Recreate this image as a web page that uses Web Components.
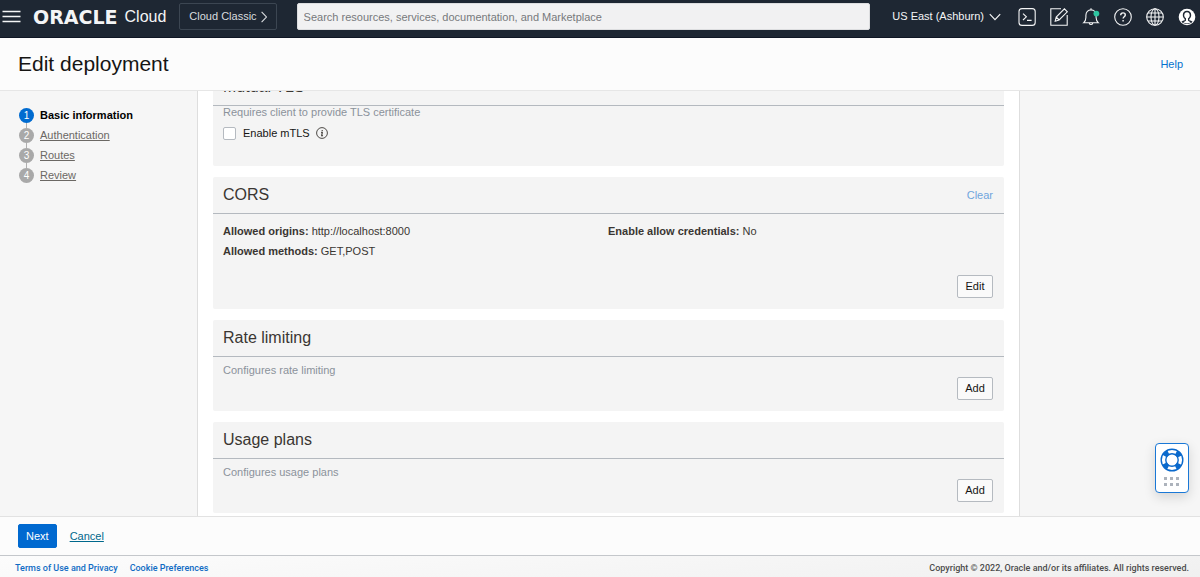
<!DOCTYPE html>
<html lang="en">
<head>
<meta charset="utf-8">
<meta name="viewport" content="width=device-width, initial-scale=1">
<title>Edit deployment</title>
<style>
  html, body { height: 100%; margin: 0; }
  body { font: 11px/13px "Liberation Sans", Arial, sans-serif; color: #3a3632; background: #fcfcfc; }
</style>
</head>
<body>
<oc-app></oc-app>

<script>
const define = (name, html, ready) => {
  const template = document.createElement('template');
  template.innerHTML = html;
  customElements.define(name, class extends HTMLElement {
    constructor() {
      super();
      this.attachShadow({ mode: 'open' }).append(template.content.cloneNode(true));
    }
    connectedCallback() { if (ready) ready(this, this.shadowRoot); }
  });
};

define('oc-logo', `
  <style>
    :host { display: flex; align-items: center; gap: 7px; color: #f4f5f6; }
    .brand { font: bold 19px/20px "DejaVu Sans", sans-serif; }
    .product { font-size: 16px; line-height: 20px; }
  </style>
  <span class="brand">ORACLE</span><span class="product">Cloud</span>`);

define('oc-icon-button', `
  <style>
    :host { display: block; }
    button { display: block; padding: 0; border: 0; background: none; color: inherit; }
    ::slotted(svg) { display: block; width: 18px; height: 18px; overflow: visible; fill: none; stroke: currentColor; stroke-width: 1.1; }
  </style>
  <button type="button"><slot></slot></button>`,
  (host, root) => root.querySelector('button').setAttribute('aria-label', host.getAttribute('label')));

define('oc-topbar', `
  <style>
    :host { display: flex; align-items: center; box-sizing: border-box; height: 38px; padding: 0 4px 4px 2px;
            background: #1e2733; border-bottom: 1px solid #0f1624; color: #f4f5f6; }
    svg { display: block; fill: none; stroke: currentColor; }
    oc-logo { margin-left: 12px; }
    button { font: inherit; color: inherit; background: none; border: 0; padding: 0; display: flex; align-items: center; }
    .classic { box-sizing: border-box; height: 27px; margin-left: 13px; padding: 0 9px; gap: 4px; color: #d9dcdf;
               border: 1px solid #3c4652; border-radius: 2px; white-space: nowrap; }
    input { flex: 1; min-width: 0; box-sizing: border-box; height: 27px; margin: 0 22px 0 20px; padding: 0 6px;
            font: inherit; color: #333; background: #f1f1f2; border: 1px solid #dcdddf; border-radius: 2px; }
    input::placeholder { color: #77797c; opacity: 1; }
    .region { gap: 5px; white-space: nowrap; }
    nav { display: flex; gap: 14px; margin-left: 17px; }
  </style>
  <button type="button" aria-label="Navigation menu">
    <svg width="19" height="13" viewBox="0 0 19 13" stroke-width="1.6"><path d="M.5 1.5h18M.5 6.5h18M.5 11.5h18"/></svg>
  </button>
  <oc-logo></oc-logo>
  <button type="button" class="classic">Cloud Classic
    <svg width="6" height="12" viewBox="0 0 6 12" stroke-width="1.1"><path d="M.6 .8 5.4 6 .6 11.2"/></svg>
  </button>
  <input type="search" aria-label="Search" placeholder="Search resources, services, documentation, and Marketplace">
  <button type="button" class="region">US East (Ashburn)
    <svg width="12" height="8" viewBox="0 0 12 8" stroke-width="1.2"><path d="M.8 1.2 6 6.6l5.2-5.4"/></svg>
  </button>
  <nav aria-label="Tools">
    <oc-icon-button label="Developer tools"><svg viewBox="0 0 18 18"><rect x="1" y=".6" width="16.2" height="16.8" rx="3"/><path d="M5 5.6 8.4 8.8 5 12M9 12.4h4.6"/></svg></oc-icon-button>
    <oc-icon-button label="Edit"><svg viewBox="0 0 18 18"><path d="M11 .8H.8v16.400h16.400V7M5.200 13.200l1-4.200L14.400.9l2.900 2.900-8.200 8.200zM6.200 9l2.900 3"/></svg></oc-icon-button>
    <oc-icon-button label="Announcements"><svg viewBox="0 0 18 18"><path d="M9 .2v1.6M1.600 14.800c1.800-1.600 2.300-3 2.300-5.400V7.200C3.900 4 6.100 1.900 9 1.900s5.100 2.100 5.100 5.300v2.200c0 2.400.5 3.800 2.300 5.400zM7.200 15.200a1.900 1.900 0 0 0 3.600 0"/><circle cx="14.400" cy="5.600" r="2.900" fill="#2ec4a0" stroke="none"/></svg></oc-icon-button>
    <oc-icon-button label="Help"><svg viewBox="0 0 18 18"><circle cx="9" cy="9" r="8.300"/><path stroke-width="1.400" d="M6.700 7.200C6.700 5.700 7.700 4.900 9 4.900s2.300.8 2.300 2.100c0 1.800-2.200 1.800-2.200 3.600M9.100 12v1.500"/></svg></oc-icon-button>
    <oc-icon-button label="Language"><svg viewBox="0 0 18 18"><circle cx="9" cy="9" r="8.300"/><ellipse cx="9" cy="9" rx="4" ry="8.300"/><path d="M9 .7v16.600M.7 9h16.600M2 5h14M2 13h14"/></svg></oc-icon-button>
    <oc-icon-button label="Profile"><svg viewBox="0 0 18 18"><circle cx="9" cy="9" r="8.300" fill="#fff" stroke="none"/><path fill="#1e2733" stroke="none" d="M9 2.800c-2.700 0-4.200 1.900-4.200 4.300 0 1.800.7 3.100 1.900 3.900v1.200c-1.300.3-2.500.8-3.300 1.500 1.300 1.500 3.400 2 5.600 2s4.300-.5 5.600-2c-.8-.7-2-1.200-3.300-1.500V11c1.200-.8 1.900-2.100 1.900-3.900 0-2.400-1.500-4.300-4.200-4.300z"/><ellipse cx="9" cy="7.300" rx="2.700" ry="3.100" fill="#fff" stroke="none"/><path d="M5.200 14.400C5.800 13.400 7.800 13.400 8 12.400V10h2v2.400c.2 1 2.200 1 2.800 2-2 1-5.600 1-7.600 0z" fill="#fff" stroke="none"/></svg></oc-icon-button>
  </nav>`);

define('oc-titlebar', `
  <style>
    :host { display: flex; align-items: center; justify-content: space-between; box-sizing: border-box; height: 53px;
            padding: 0 17px 0 18px; background: #fcfcfc; border-bottom: 1px solid #e6e6e6; }
    h1 { margin: 0; font-size: 21px; line-height: 26px; font-weight: normal; color: #161513; }
    a { color: #0572ce; text-decoration: none; }
  </style>
  <h1><slot></slot></h1><a href="#help">Help</a>`);

define('oc-step', `
  <style>
    :host { display: flex; align-items: center; gap: 6px; height: 20px; --dot: #a9a9a9; }
    :host([current]) { --dot: #006bd0; }
    .rail { display: flex; flex-direction: column; align-items: center; height: 20px; }
    .rail::before, .rail::after { content: ""; flex: 1; width: 1px; background: #b0b0b0; }
    :host([first]) .rail::before, :host([last]) .rail::after { background: none; }
    .dot { width: 15px; height: 15px; border-radius: 50%; background: var(--dot); color: #fff; font-size: 10px; line-height: 15px; text-align: center; }
    a { color: #6b6864; text-decoration: underline; }
    :host([current]) a { color: #000; font-weight: bold; text-decoration: none; }
  </style>
  <span class="rail"><span class="dot"></span></span><a href="#step"><slot></slot></a>`,
  (host, root) => { root.querySelector('.dot').textContent = host.getAttribute('number'); });

define('oc-button', `
  <style>
    :host { display: inline-block; }
    button { display: block; box-sizing: border-box; height: 23px; min-width: 36px; padding: 0 7px; font: inherit; color: #161513;
             background: #fafafa; border: 1px solid #b5bac0; border-radius: 2px; }
    :host([primary]) button { height: 24px; color: #fff; background: #0069d0; border-color: #0069d0; }
  </style>
  <button type="button"><slot></slot></button>`);

define('oc-card', `
  <style>
    :host { display: flex; flex-direction: column; flex: none; box-sizing: border-box; min-height: 91px;
            background: #f4f4f4; border-radius: 2px; }
    header { display: flex; align-items: center; justify-content: space-between; height: 36px; padding: 0 11px 0 10px; border-bottom: 1px solid #b4b9bf; }
    h2 { margin: 0; font-size: 16px; line-height: 20px; font-weight: normal; color: #3a3632; }
    .body { padding: 7px 11px 0 10px; }
    :host([tight]) .body { padding-top: 0; }
    footer { display: flex; justify-content: flex-end; margin-top: auto; padding: 0 11px 11px; }
  </style>
  <header><h2><slot name="title"></slot></h2><slot name="action"></slot></header>
  <div class="body"><slot></slot></div>
  <footer><slot name="footer"></slot></footer>`);

define('oc-field', `
  <style>:host { display: block; line-height: 20px; }</style>
  <b></b> <slot></slot>`,
  (host, root) => { root.querySelector('b').textContent = host.getAttribute('label') + ':'; });

define('oc-check', `
  <style>
    :host { display: flex; align-items: center; height: 28px; color: #161513; }
    label { display: flex; align-items: center; gap: 7px; }
    input { appearance: none; box-sizing: border-box; width: 13px; height: 13px; margin: 0; background: #fff; border: 1px solid #b5bac0; border-radius: 2px; }
    svg { display: block; margin-left: 6px; }
  </style>
  <label><input type="checkbox"><slot></slot></label>
  <svg width="12" height="12" viewBox="0 0 12 12" role="img" aria-label="Information" fill="none" stroke="#3a3632">
    <circle cx="6" cy="6" r="5.400" stroke-width=".9"/><path stroke-width="1.100" d="M5 5.200h1.300L5.700 8.700H7M6.300 3l-.2 1"/>
  </svg>`);

define('oc-sections', `
  <style>
    :host { display: flex; flex-direction: column; gap: 11px; box-sizing: border-box; min-height: 0; padding: 0 15px 3px;
            background: #fff; overflow-y: auto; scrollbar-width: none; }
    .tls { min-height: 97px; }
    .cors { min-height: 132px; }
    .hint { margin: 0; color: #8b929b; }
    .pair { display: grid; grid-template-columns: 1fr 1fr; }
    a { color: #6fa5dd; text-decoration: none; }
  </style>
  <oc-card class="tls" tight>
    <span slot="title">Mutual TLS</span>
    <p class="hint">Requires client to provide TLS certificate</p>
    <oc-check>Enable mTLS</oc-check>
  </oc-card>
  <oc-card class="cors">
    <span slot="title">CORS</span><a slot="action" href="#clear">Clear</a>
    <div class="pair">
      <oc-field label="Allowed origins">http://localhost:8000</oc-field>
      <oc-field label="Enable allow credentials">No</oc-field>
      <oc-field label="Allowed methods">GET,POST</oc-field>
    </div>
    <oc-button slot="footer">Edit</oc-button>
  </oc-card>
  <oc-card>
    <span slot="title">Rate limiting</span>
    <p class="hint">Configures rate limiting</p>
    <oc-button slot="footer">Add</oc-button>
  </oc-card>
  <oc-card>
    <span slot="title">Usage plans</span>
    <p class="hint">Configures usage plans</p>
    <oc-button slot="footer">Add</oc-button>
  </oc-card>`,
  host => requestAnimationFrame(() => { host.scrollTop = host.scrollHeight; }));

define('oc-support', `
  <style>
    :host { display: block; }
    button { display: flex; flex-direction: column; align-items: center; gap: 5px; box-sizing: border-box; width: 34px; height: 50px;
             padding: 4px 0; background: #fff; border: 1px solid #1a78d6; border-radius: 4px; box-shadow: 0 4px 12px rgba(0,0,0,.14); }
    svg { display: block; flex: none; }
  </style>
  <button type="button" aria-label="Support">
    <svg width="24" height="24" viewBox="0 0 24 24" fill="none" stroke="#0a69cc">
      <circle cx="12" cy="12" r="10.800" stroke-width="1.400"/><circle cx="12" cy="12" r="6.200" stroke-width="1.400"/>
      <circle cx="12" cy="12" r="8.400" stroke-width="5" stroke-dasharray="5.200 7.995" stroke-dashoffset="-3.998"/>
    </svg>
    <svg width="16" height="10" viewBox="0 0 16 10" fill="#adb3bc"><path d="M0 0h3v3H0zM6 0h3v3H6zM12 0h3v3h-3zM0 6h3v3H0zM6 6h3v3H6zM12 6h3v3h-3z"/></svg>
  </button>`);

define('oc-footer', `
  <style>
    :host { display: block; }
    .actions { display: flex; align-items: center; gap: 13px; box-sizing: border-box; height: 39px; padding: 0 18px;
               background: #fcfcfc; border-top: 1px solid #e2e2e2; }
    .actions a { color: #00688c; text-decoration: underline; }
    .legal { display: flex; align-items: center; gap: 12px; box-sizing: border-box; height: 22px; padding: 3px 11px 0 15px;
             border-top: 1px solid #c4c7cb; background: linear-gradient(175deg, #fcfcfc, #f0f0f0);
             font: 500 9px/12px Roboto, sans-serif; color: #4c4c4c; }
    .legal a { color: #0f6bc4; text-decoration: none; }
    .legal span { margin-left: auto; }
  </style>
  <div class="actions"><oc-button primary>Next</oc-button><a href="#cancel">Cancel</a></div>
  <div class="legal"><a href="#terms">Terms of Use and Privacy</a><a href="#cookies">Cookie Preferences</a>
    <span>Copyright © 2022, Oracle and/or its affiliates. All rights reserved.</span></div>`);

define('oc-app', `
  <style>
    :host { display: flex; flex-direction: column; height: 100vh; }
    main { flex: 1; min-height: 0; display: grid; grid-template: minmax(0, 1fr) / 198px minmax(0, 1fr) 181px; background: #f6f6f6; }
    .steps { box-sizing: border-box; padding: 14px 19px; border-right: 1px solid #dedede; }
    aside { border-left: 1px solid #dedede; }
    oc-support { position: absolute; right: 11px; bottom: 84px; }
  </style>
  <oc-topbar></oc-topbar>
  <oc-titlebar>Edit deployment</oc-titlebar>
  <main>
    <nav class="steps" aria-label="Steps">
      <oc-step number="1" current first>Basic information</oc-step>
      <oc-step number="2">Authentication</oc-step>
      <oc-step number="3">Routes</oc-step>
      <oc-step number="4" last>Review</oc-step>
    </nav>
    <oc-sections></oc-sections>
    <aside></aside>
  </main>
  <oc-footer></oc-footer>
  <oc-support></oc-support>`);
</script>
</body>
</html>
